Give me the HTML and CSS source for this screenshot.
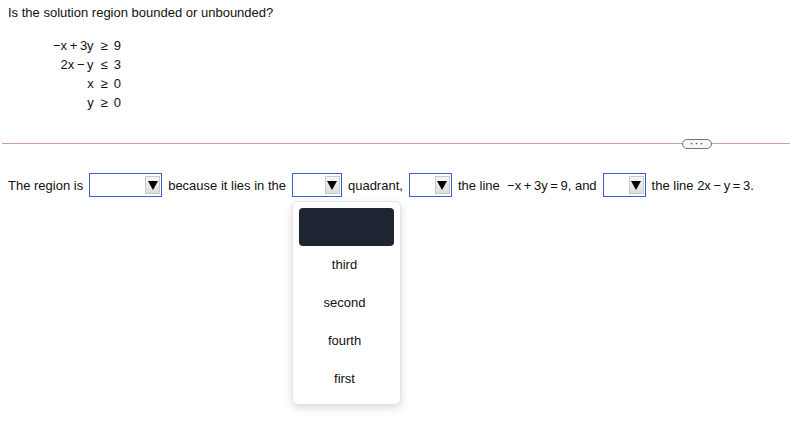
FILE: index.html
```html
<!DOCTYPE html>
<html lang="en">
<head>
    <meta charset="UTF-8">
    <title>Solution Region</title>
    <link rel="stylesheet" href="styles.css">
</head>
<body>

    <div class="question">
        <p class="prompt">Is the solution region bounded or unbounded?</p>

        <table class="system">
            <tr><td class="lhs">&minus;x&thinsp;+&thinsp;3y</td><td class="rel">&ge;</td><td class="rhs">9</td></tr>
            <tr><td class="lhs">2x&thinsp;&minus;&thinsp;y</td><td class="rel">&le;</td><td class="rhs">3</td></tr>
            <tr><td class="lhs">x</td><td class="rel">&ge;</td><td class="rhs">0</td></tr>
            <tr><td class="lhs">y</td><td class="rel">&ge;</td><td class="rhs">0</td></tr>
        </table>
    </div>

    <div class="divider">
        <span class="more">&middot;&middot;&middot;</span>
    </div>

    <div class="answer">
        <span>The region is</span>
        <span class="select w1"><span class="arrow"></span></span>
        <span>because it lies in the</span>
        <span class="select w2"><span class="arrow"></span></span>
        <span>quadrant,</span>
        <span class="select w3"><span class="arrow"></span></span>
        <span>the line &nbsp;&minus;x&thinsp;+&thinsp;3y&thinsp;=&thinsp;9, and</span>
        <span class="select w3"><span class="arrow"></span></span>
        <span>the line 2x&thinsp;&minus;&thinsp;y&thinsp;=&thinsp;3.</span>
    </div>

    <div class="options-row">
        <div class="options">
            <div class="options-blank"></div>
            <div class="option">third</div>
            <div class="option">second</div>
            <div class="option">fourth</div>
            <div class="option">first</div>
        </div>
    </div>

</body>
</html>
```

FILE: styles.css
```css
body {
    font-family: "Liberation Sans", Arial, sans-serif;
    font-size: 13px;
    margin: 0;
    padding: 0;
    color: #111;
    background: #fff;
}
.question {
    padding: 5px 8px 0 8px;
}
.prompt {
    margin: 0;
    line-height: 15px;
}
.system {
    margin: 16px 0 0 45px;
    border-collapse: collapse;
}
.system td {
    padding: 0;
    height: 19px;
    line-height: 19px;
}
.lhs {
    text-align: right;
    padding-right: 6px !important;
}
.rel {
    width: 9px;
    text-align: center;
}
.rhs {
    padding-left: 5px !important;
}
.divider {
    position: relative;
    margin: 31px 0 0 2px;
    height: 0;
    border-top: 1px solid #c99cb0;
}
.more {
    position: absolute;
    left: 680px;
    top: -5px;
    width: 28px;
    height: 8px;
    border: 1px solid #6b7785;
    border-radius: 5px;
    background: #f4f6f8;
    font-size: 12px;
    line-height: 6px;
    text-align: center;
    color: #333;
    letter-spacing: 1px;
}
.answer {
    display: flex;
    align-items: center;
    gap: 6px;
    padding: 29px 0 0 8px;
    white-space: nowrap;
}
.select {
    display: inline-flex;
    justify-content: flex-end;
    align-items: center;
    box-sizing: border-box;
    height: 24px;
    border: 1px solid #3a5fd0;
    padding-right: 1px;
    background: #fff;
}
.w1 { width: 73px; }
.w2 { width: 50px; }
.w3 { width: 43px; }
.arrow {
    display: flex;
    align-items: center;
    justify-content: center;
    box-sizing: border-box;
    width: 15px;
    height: 18px;
    border: 1px solid #c8c8c8;
    background: linear-gradient(#f6f6f6, #dedede);
}
.arrow::after {
    content: "";
    border-left: 5px solid transparent;
    border-right: 5px solid transparent;
    border-top: 9px solid #000;
}
.options-row {
    padding: 4px 0 24px 292px;
}
.options {
    width: 109px;
    padding: 6px;
    box-sizing: border-box;
    background: #fff;
    border: 1px solid #e4e4e4;
    border-radius: 6px;
    box-shadow: 0 3px 8px rgba(0, 0, 0, 0.15);
}
.option,
.options-blank {
    height: 38px;
    line-height: 38px;
    text-align: center;
}
.option {
    padding-right: 4px;
}
.options-blank {
    border-radius: 4px;
    background: #1e2431;
}
```
